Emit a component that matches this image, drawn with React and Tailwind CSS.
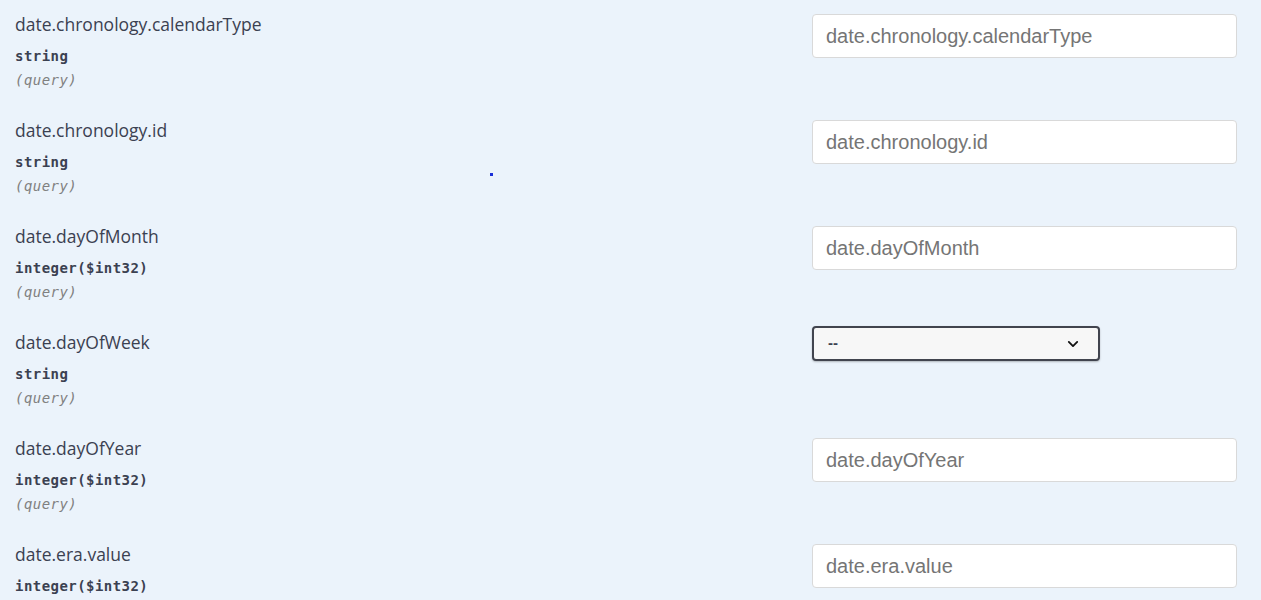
import React from 'react';

const params = [
  { name: 'date.chronology.calendarType', type: 'string', kind: 'input' },
  { name: 'date.chronology.id', type: 'string', kind: 'input' },
  { name: 'date.dayOfMonth', type: 'integer($int32)', kind: 'input' },
  { name: 'date.dayOfWeek', type: 'string', kind: 'select' },
  { name: 'date.dayOfYear', type: 'integer($int32)', kind: 'input' },
  { name: 'date.era.value', type: 'integer($int32)', kind: 'input' },
];

const ParamRow = ({ p }) => (
  <div className="flex h-[106px] shrink-0">
    <div className="w-[812px] pl-[15px] pt-[12px]">
      <div className="h-[24px] leading-[24px] text-[17.5px] text-[#3b4151] font-['Open_Sans',sans-serif]">
        {p.name}
      </div>
      <div className="mt-[11px] h-[18px] leading-[18px] text-[14px] font-semibold tracking-[0.45px] text-[#3b4151] font-['DejaVu_Sans_Mono',monospace]">
        {p.type}
      </div>
      <div className="mt-[6px] h-[18px] leading-[18px] text-[14px] italic tracking-[0.45px] text-[#808080] font-['DejaVu_Sans_Mono',monospace]">
        (query)
      </div>
    </div>
    <div className="pt-[14px]">
      {p.kind === 'input' ? (
        <input
          readOnly
          placeholder={p.name}
          className="w-[425px] h-[44px] px-[13px] bg-white border border-[#d9d9d9] rounded-[4px] text-[20px] placeholder:text-[#757575] font-['Liberation_Sans',sans-serif] outline-none"
        />
      ) : (
        <div className="mt-[-2px] w-[288px] h-[35px] flex items-center justify-between pl-[14px] pr-[18px] bg-[#f7f7f7] border-2 border-[#41444e] rounded-[4px] shadow-[0_1px_2px_rgba(0,0,0,0.25)] -translate-y-[4px]">
          <span className="text-[15px] font-bold text-[#3b4151] font-['Liberation_Sans',sans-serif]">--</span>
          <svg width="14" height="14" viewBox="0 0 20 20" fill="none" stroke="#111" strokeWidth="2.6" strokeLinecap="round" strokeLinejoin="round">
            <path d="M4 7l6 6 6-6" />
          </svg>
        </div>
      )}
    </div>
  </div>
);

export default function App() {
  return (
    <div className="relative w-[1261px] h-[600px] overflow-hidden bg-[#ebf3fb] flex flex-col">
      {params.map((p) => (
        <ParamRow key={p.name} p={p} />
      ))}
      <div className="absolute left-[490px] top-[173px] w-[3px] h-[3px] bg-[#1a2fd8]" />
    </div>
  );
}
